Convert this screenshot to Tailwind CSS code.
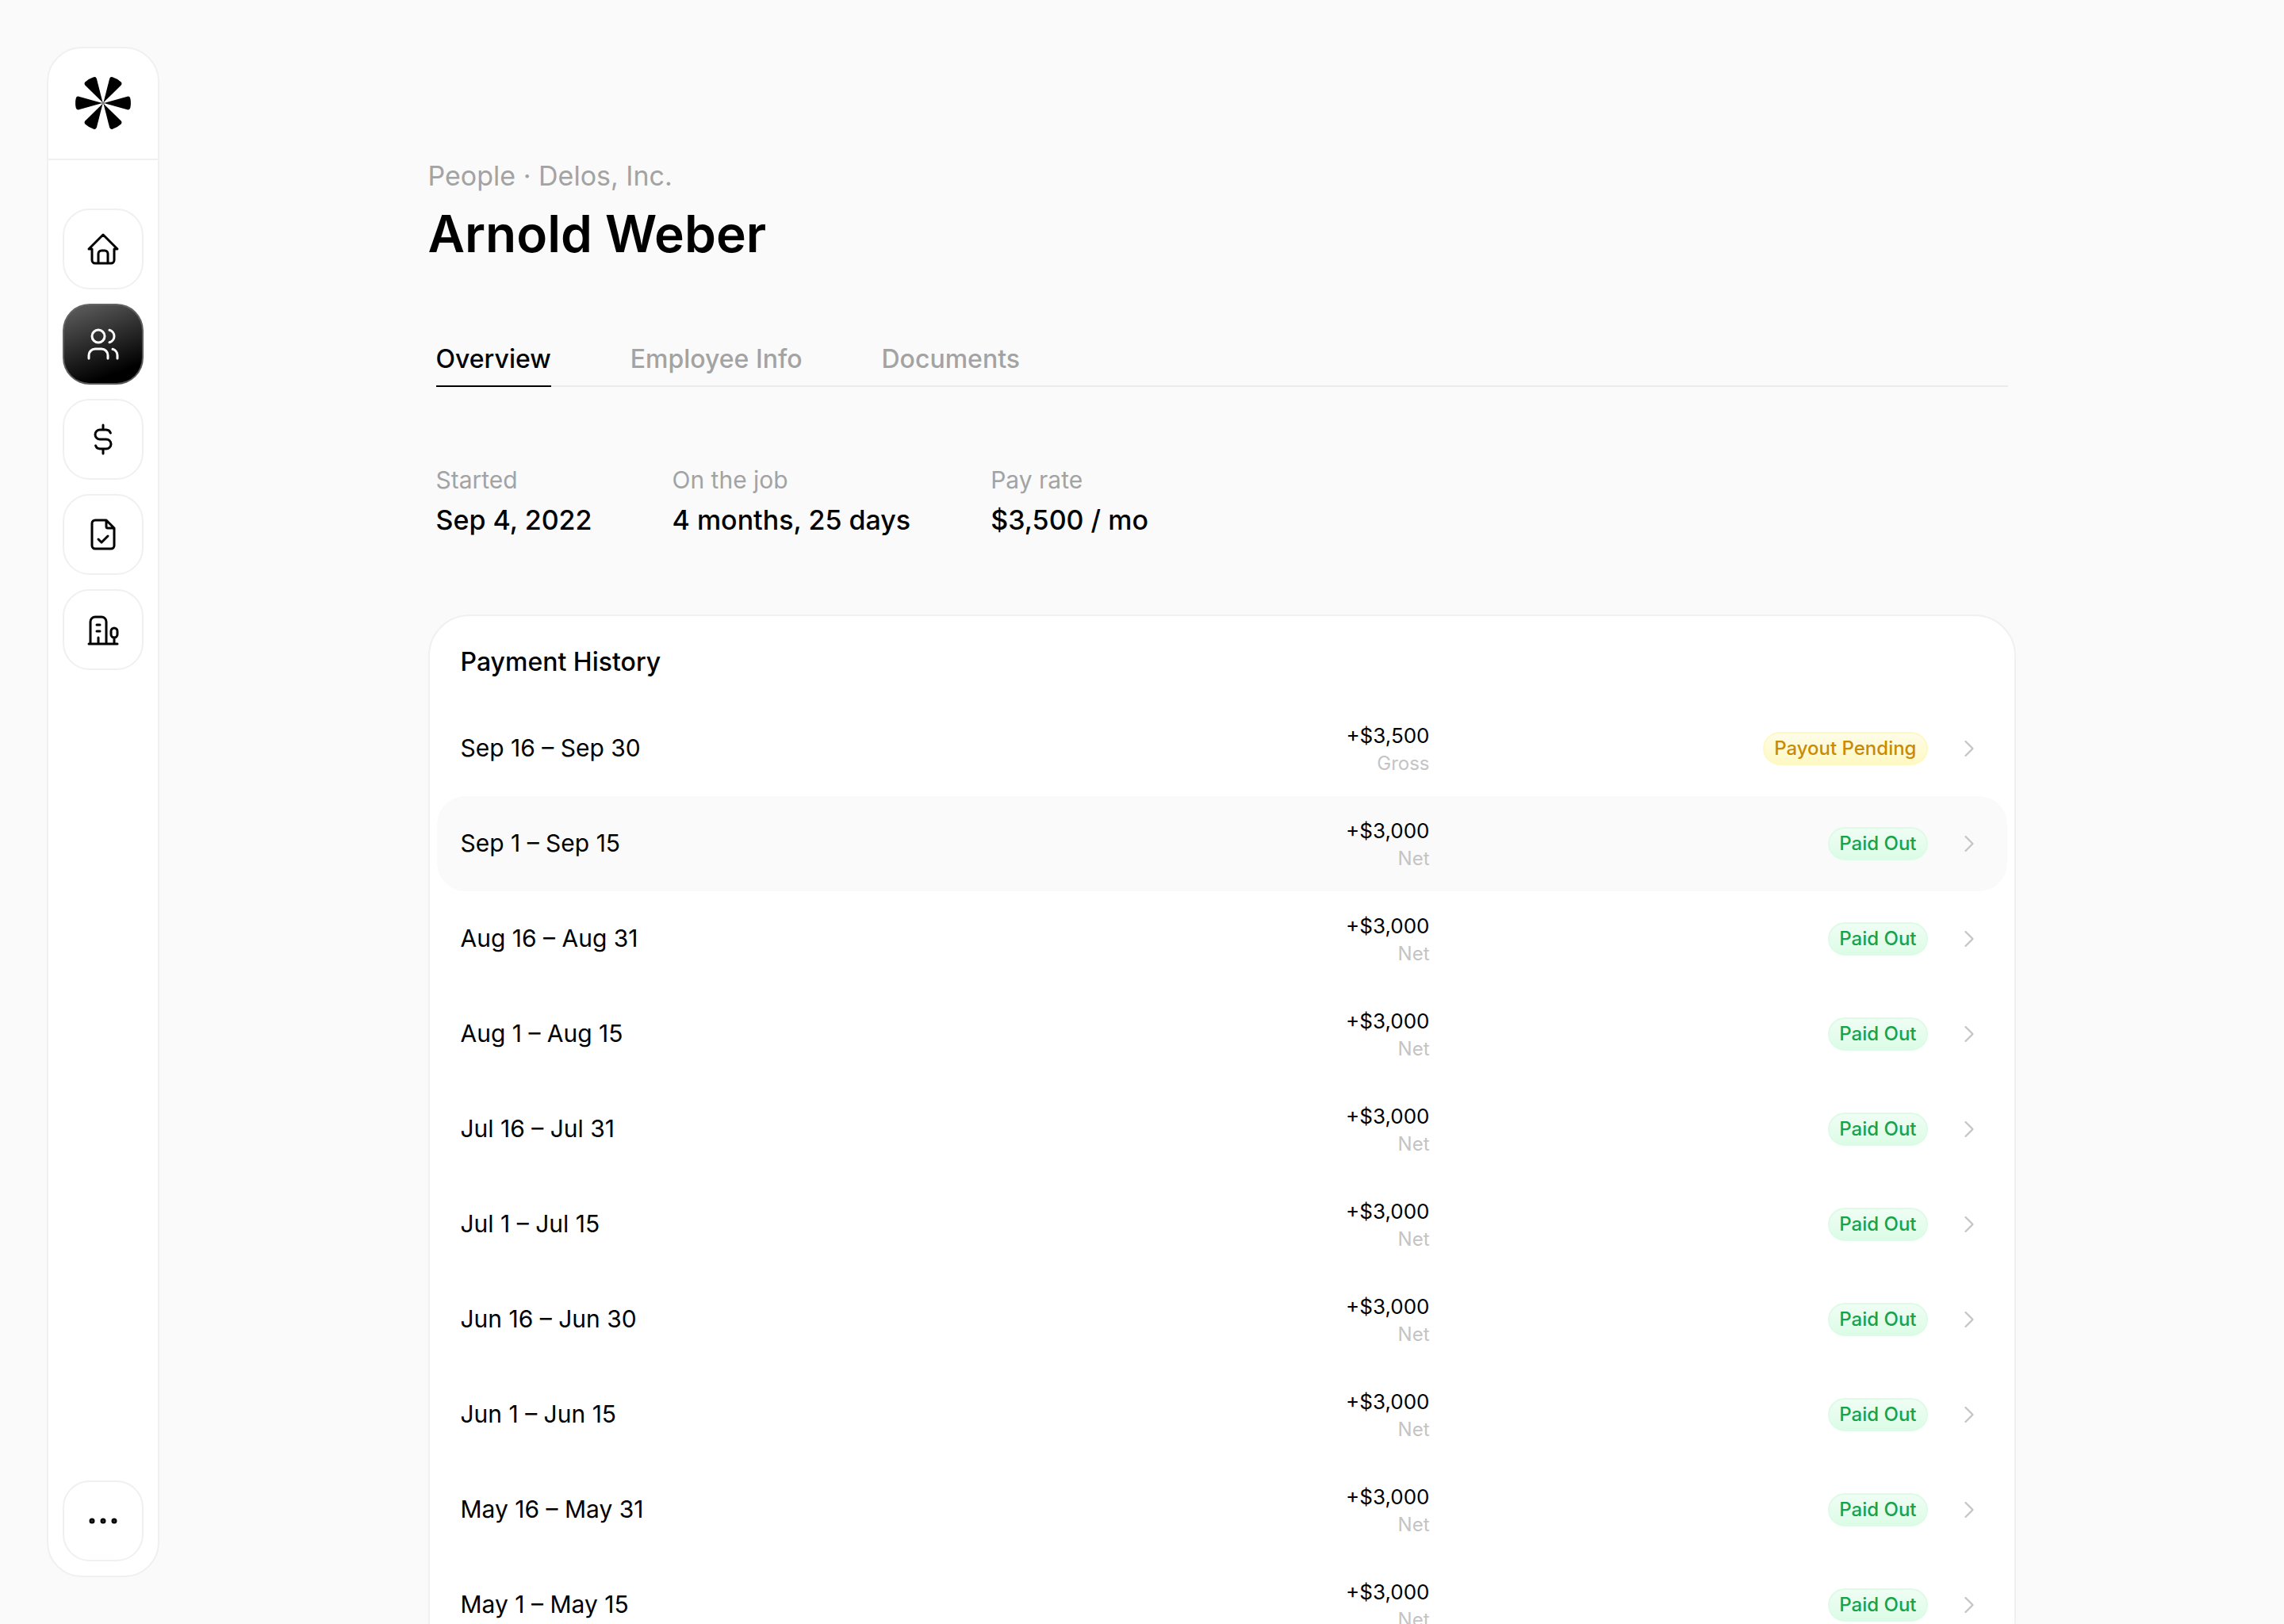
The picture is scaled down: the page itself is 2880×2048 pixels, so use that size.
<!DOCTYPE html>
<html lang="en">
<head>
<meta charset="utf-8">
<meta name="viewport" content="width=device-width, initial-scale=1">
<title>Arnold Weber · People</title>
<script src="https://cdn.jsdelivr.net/npm/@tailwindcss/browser@4"></script>
</head>
<body class="flex h-screen overflow-hidden bg-[#fafafa] font-[Inter,sans-serif] text-black">

<aside class="flex shrink-0 py-[59px] pl-[59px]">
  <div class="flex w-[142px] flex-col rounded-[44px] border-2 border-[#f0f0f0] bg-white">
    <a href="#" aria-label="Dashboard" class="flex h-[141px] shrink-0 items-center justify-center border-b-2 border-[#f0f0f0] pb-px">
      <svg class="size-[70px]" viewBox="-35 -35 70 70" fill="currentColor" aria-hidden="true">
        <defs><path id="petal" d="M1 0L30.5 -8.3Q33.6 -9 34.3 -6Q35.6 0 34.3 6Q33.6 9 30.5 8.3Z"/></defs>
        <use href="#petal"/>
        <use href="#petal" transform="rotate(60)"/>
        <use href="#petal" transform="rotate(120)"/>
        <use href="#petal" transform="rotate(180)"/>
        <use href="#petal" transform="rotate(240)"/>
        <use href="#petal" transform="rotate(300)"/>
        <circle r="2" fill="#808080"/>
      </svg>
    </a>
    <nav aria-label="Main" class="flex grow flex-col items-center gap-[18px] pt-[61px] pb-[18px]">
      <a href="#" aria-label="Home" class="flex size-[102px] items-center justify-center rounded-[34px] border-2 border-[#f0f0f0] bg-white">
        <svg class="size-12" viewBox="0 0 24 24" fill="none" stroke="currentColor" stroke-width="1.5" stroke-linecap="round" stroke-linejoin="round" aria-hidden="true"><path d="M5 12H3l9-9 9 9h-2M5 12v7a2 2 0 0 0 2 2h10a2 2 0 0 0 2-2v-7M9 21v-6a2 2 0 0 1 2-2h2a2 2 0 0 1 2 2v6"/></svg>
      </a>
      <a href="#" aria-label="People" aria-current="page" class="flex size-[102px] items-center justify-center rounded-[34px] bg-linear-160 from-[#666] to-[#555] p-[2px] text-white">
        <span class="flex size-full items-center justify-center rounded-[32px] bg-[linear-gradient(160deg,#555_10%,#000_82%)]">
          <svg class="size-12" viewBox="0 0 24 24" fill="none" stroke="currentColor" stroke-width="1.5" stroke-linecap="round" stroke-linejoin="round" aria-hidden="true"><path d="M5 7a4 4 0 1 0 8 0 4 4 0 1 0-8 0M3 21v-2a4 4 0 0 1 4-4h4a4 4 0 0 1 4 4v2M16 3.13a4 4 0 0 1 0 7.75M21 21v-2a4 4 0 0 0-3-3.85"/></svg>
        </span>
      </a>
      <a href="#" aria-label="Payroll" class="flex size-[102px] items-center justify-center rounded-[34px] border-2 border-[#f0f0f0] bg-white">
        <svg class="size-12" viewBox="0 0 24 24" fill="none" stroke="currentColor" stroke-width="1.5" stroke-linecap="round" stroke-linejoin="round" aria-hidden="true"><path d="M16.7 8A3 3 0 0 0 14 6h-4a3 3 0 0 0 0 6h4a3 3 0 0 1 0 6h-4a3 3 0 0 1-2.7-2M12 3v3m0 12v3"/></svg>
      </a>
      <a href="#" aria-label="Documents" class="flex size-[102px] items-center justify-center rounded-[34px] border-2 border-[#f0f0f0] bg-white">
        <svg class="size-12" viewBox="0 0 24 24" fill="none" stroke="currentColor" stroke-width="1.5" stroke-linecap="round" stroke-linejoin="round" aria-hidden="true"><path d="M14 3v4a1 1 0 0 0 1 1h4M17 21H7a2 2 0 0 1-2-2V5a2 2 0 0 1 2-2h7l5 5v11a2 2 0 0 1-2 2zM9 15l2 2 4-4"/></svg>
      </a>
      <a href="#" aria-label="Company" class="flex size-[102px] items-center justify-center rounded-[34px] border-2 border-[#f0f0f0] bg-white">
        <svg class="size-12" viewBox="0 0 24 24" fill="none" stroke="currentColor" stroke-width="1.5" stroke-linecap="round" stroke-linejoin="round" aria-hidden="true"><path d="M3 21h18M19 21v-4M19 17a2 2 0 0 0 2-2v-2a2 2 0 1 0-4 0v2a2 2 0 0 0 2 2zM14 21V7a3 3 0 0 0-3-3H7a3 3 0 0 0-3 3v14M9 17v4M8 13h2M8 9h2"/></svg>
      </a>
      <button type="button" aria-label="More" class="mt-auto flex size-[102px] items-center justify-center rounded-[34px] border-2 border-[#f0f0f0] bg-white">
        <svg class="size-12" viewBox="0 0 24 24" fill="none" stroke="currentColor" stroke-width="1.5" aria-hidden="true"><circle cx="5" cy="12" r="1"/><circle cx="12" cy="12" r="1"/><circle cx="19" cy="12" r="1"/></svg>
      </button>
    </nav>
  </div>
</aside>

<main class="min-w-0 grow overflow-y-auto px-[59px] [scrollbar-width:none]">
  <div class="mx-auto max-w-[2002px] pt-[200px] pb-[59px]">
    <header>
      <p class="text-[34px] leading-[44px] text-[#a3a3a3]">People · Delos, Inc.</p>
      <h1 class="mt-[11px] text-[64px] leading-[80px] font-semibold">Arnold Weber</h1>
    </header>

    <nav aria-label="Employee" class="mx-[10px] mt-[98px] flex gap-[100px] text-[32px] leading-[40px] font-medium text-[#a3a3a3] shadow-[inset_0_-2px_#ebebeb]">
      <a href="#" aria-current="page" class="border-b-2 border-black pb-[13px] text-black">Overview</a>
      <a href="#" class="pb-[15px]">Employee Info</a>
      <a href="#" class="pb-[15px]">Documents</a>
    </nav>

    <dl class="mx-[10px] mt-[97px] flex gap-[101px]">
      <div>
        <dt class="text-[30px] leading-[40px] text-[#a3a3a3]">Started</dt>
        <dd class="mt-[9px] text-[34px] leading-[44px] font-medium">Sep 4, 2022</dd>
      </div>
      <div>
        <dt class="text-[30px] leading-[40px] text-[#a3a3a3]">On the job</dt>
        <dd class="mt-[9px] text-[34px] leading-[44px] font-medium">4 months, 25 days</dd>
      </div>
      <div>
        <dt class="text-[30px] leading-[40px] text-[#a3a3a3]">Pay rate</dt>
        <dd class="mt-[9px] text-[34px] leading-[44px] font-medium">$3,500 / mo</dd>
      </div>
    </dl>

    <section class="mt-[97px] rounded-[52px] border-2 border-[#f0f0f0] bg-white px-[9px] pb-[9px]">
      <h2 class="px-[30px] pt-[38px] pb-[29px] text-[32px] leading-[40px] font-medium">Payment History</h2>
      <table class="w-full table-fixed" aria-label="Payment history">
        <colgroup><col class="w-1/2"><col class="w-[262px]"><col><col class="w-[100px]"></colgroup>
        <tbody id="rows"></tbody>
      </table>
    </section>
  </div>
</main>

<script>
const periods = ['Sep 16 – Sep 30', 'Sep 1 – Sep 15', 'Aug 16 – Aug 31', 'Aug 1 – Aug 15', 'Jul 16 – Jul 31', 'Jul 1 – Jul 15', 'Jun 16 – Jun 30', 'Jun 1 – Jun 15', 'May 16 – May 31', 'May 1 – May 15'];
document.getElementById('rows').innerHTML = periods.map((period, i) => {
  const pending = i === 0;
  const badge = pending
    ? 'border-[#fef9c3] from-[#fefce8] to-[#fef9c3] text-[#ca8a04]'
    : 'border-[#dcfce7] from-[#f0fdf4] to-[#dcfce7] text-[#16a34a]';
  return `<tr class="${i === 1 ? 'bg-[#fafafa]' : 'bg-white'}">
    <th scope="row" class="h-[120px] rounded-l-[36px] pb-[2px] pl-[30px] text-left text-[30px] leading-[40px] font-normal">${period}</th>
    <td class="pt-[2px] text-right text-[26px] leading-[34px]">+$${pending ? '3,500' : '3,000'}<br><span class="text-[24px] text-[#c4c4c4]">${pending ? 'Gross' : 'Net'}</span></td>
    <td><span class="ml-auto block w-fit rounded-full border-2 bg-linear-to-b px-[12px] text-[24px] leading-[38px] font-medium ${badge}">${pending ? 'Payout Pending' : 'Paid Out'}</span></td>
    <td class="rounded-r-[36px] pr-[30px]"><a href="#" aria-label="View ${period}" class="ml-auto block size-9 text-[#c4c4c4]"><svg class="size-full" viewBox="0 0 24 24" fill="none" stroke="currentColor" stroke-width="1.5" stroke-linecap="round" stroke-linejoin="round" aria-hidden="true"><path d="M9 6l6 6-6 6"/></svg></a></td>
  </tr>`;
}).join('');
</script>
</body>
</html>
